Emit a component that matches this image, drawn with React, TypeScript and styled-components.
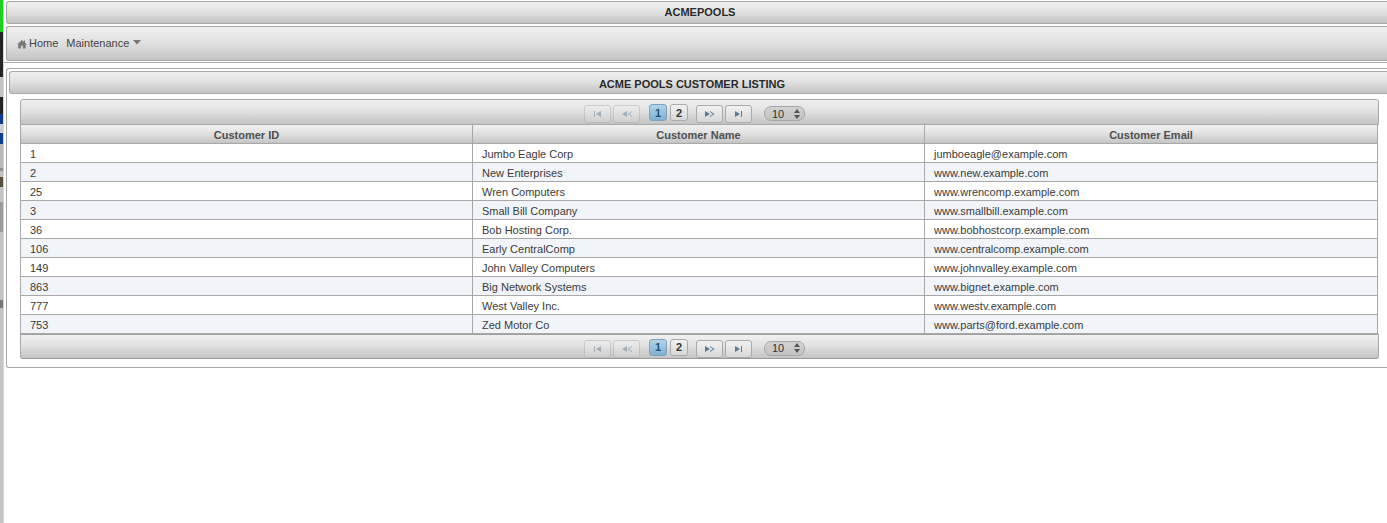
import React from 'react';
import styled, { createGlobalStyle, css } from 'styled-components';

interface Customer {
  id: string;
  name: string;
  email: string;
}

const customers: Customer[] = [
  { id: '1', name: 'Jumbo Eagle Corp', email: 'jumboeagle@example.com' },
  { id: '2', name: 'New Enterprises', email: 'www.new.example.com' },
  { id: '25', name: 'Wren Computers', email: 'www.wrencomp.example.com' },
  { id: '3', name: 'Small Bill Company', email: 'www.smallbill.example.com' },
  { id: '36', name: 'Bob Hosting Corp.', email: 'www.bobhostcorp.example.com' },
  { id: '106', name: 'Early CentralComp', email: 'www.centralcomp.example.com' },
  { id: '149', name: 'John Valley Computers', email: 'www.johnvalley.example.com' },
  { id: '863', name: 'Big Network Systems', email: 'www.bignet.example.com' },
  { id: '777', name: 'West Valley Inc.', email: 'www.westv.example.com' },
  { id: '753', name: 'Zed Motor Co', email: 'www.parts@ford.example.com' },
];

// bits of the window behind the browser, down the left edge
const stripSegments: { color: string; height: number }[] = [
  { color: '#19d419', height: 32 },
  { color: '#242424', height: 45 },
  { color: '#c4c4c4', height: 20 },
  { color: '#222222', height: 17 },
  { color: '#0c3f94', height: 10 },
  { color: '#c9d0d4', height: 9 },
  { color: '#0c3f94', height: 11 },
  { color: '#b9b9b9', height: 24 },
  { color: '#8f8f8f', height: 3 },
  { color: '#c4c4c4', height: 6 },
  { color: '#5a5040', height: 10 },
  { color: '#c4c4c4', height: 15 },
  { color: '#9b9b9b', height: 30 },
  { color: '#c4c4c4', height: 68 },
  { color: '#777777', height: 8 },
  { color: '#c4c4c4', height: 215 },
];

const GlobalStyle = createGlobalStyle`
  html, body {
    margin: 0;
    padding: 0;
    height: 100%;
    overflow: hidden;
    background: #fff;
  }
  body {
    font-family: "Liberation Sans", Arial, sans-serif;
    font-size: 11px;
    color: #333;
  }
`;

const barGradient = css`
  background: linear-gradient(to bottom, #f0f0f0 0%, #e2e2e2 45%, #c4c4c4 100%);
`;

const Page = styled.div`
  display: flex;
  width: 1387px;
  height: 523px;
  overflow: hidden;
`;

const Strip = styled.div`
  display: flex;
  flex-direction: column;
  flex: 0 0 3px;
  border-right: 1px solid #d4d4d4;
`;

const StripPiece = styled.div<{ $color: string; $height: number }>`
  flex: 0 0 ${(p) => p.$height}px;
  background: ${(p) => p.$color};
`;

const Main = styled.div`
  flex: 1;
  min-width: 0;
  padding-top: 1px;
`;

const Bars = styled.div`
  display: flex;
  flex-direction: column;
  gap: 2px;
  padding-left: 2px;
`;

const TitleBar = styled.div`
  ${barGradient}
  height: 21px;
  line-height: 21px;
  border: 1px solid #a8a8a8;
  border-right: 0;
  border-radius: 3px 0 0 3px;
  padding-left: 6px;
  text-align: center;
  font-weight: bold;
  font-size: 11px;
  color: #2a2a2a;
`;

const MenuBar = styled.div`
  ${barGradient}
  display: flex;
  align-items: center;
  height: 31px;
  border: 1px solid #a8a8a8;
  border-right: 0;
  border-radius: 3px 0 0 3px;
  padding: 0 0 2px 10px;
  color: #444;
`;

const MenuItem = styled.span`
  display: inline-flex;
  align-items: center;
  margin-right: 8px;
  font-size: 11px;
`;

const Divider = styled.div`
  height: 1px;
  margin-top: 1px;
  background: #a8a8a8;
`;

const Panel = styled.div`
  margin: 5px 0 0 2px;
  height: 296px;
  border: 1px solid #a8a8a8;
  border-right: 0;
  border-radius: 3px 0 0 3px;
  padding: 2px 0 0 2px;
`;

const PanelTitle = styled(TitleBar)`
  height: 19px;
  padding: 2px 13px 0 0;
`;

const TableWrap = styled.div`
  width: 1359px;
  margin: 5px 0 0 11px;
`;

const Paginator = styled.div<{ $top?: boolean }>`
  ${barGradient}
  box-sizing: border-box;
  display: flex;
  align-items: center;
  justify-content: center;
  height: ${(p) => (p.$top ? 26 : 25)}px;
  border: 1px solid #a8a8a8;
  border-radius: ${(p) => (p.$top ? '3px 3px 0 0' : '0 0 3px 3px')};
  padding: 3px 10px 0 0;
  ${(p) => !p.$top && 'border-top: 1px solid #a0a0a0; border-bottom-color: #999;'}
`;

const PageButton = styled.span<{ $off?: boolean; $on?: boolean; $num?: boolean; $gap?: number }>`
  box-sizing: border-box;
  display: inline-flex;
  align-items: center;
  justify-content: center;
  width: ${(p) => (p.$num ? 18 : 27)}px;
  height: ${(p) => (p.$num ? 17 : 18)}px;
  margin-left: ${(p) => p.$gap ?? 0}px;
  margin-top: ${(p) => (p.$num ? -2 : 1)}px;
  border: 1px solid ${(p) => (p.$on ? '#7ba3bf' : '#aaa')};
  border-radius: 3px;
  background: ${(p) =>
    p.$on
      ? 'linear-gradient(to bottom, #b4d3e6, #7fb1d0)'
      : 'linear-gradient(to bottom, #f1f1f1, #d8d8d8)'};
  opacity: ${(p) => (p.$off ? 0.45 : 1)};
  font-weight: bold;
  font-size: 11px;
  color: ${(p) => (p.$on ? '#1f4f73' : '#333')};
`;

const PageSelect = styled.span`
  box-sizing: border-box;
  display: inline-flex;
  align-items: center;
  justify-content: space-between;
  width: 41px;
  height: 15px;
  margin-left: 12px;
  padding: 0 4px 0 7px;
  border: 1px solid #a6a6a6;
  border-radius: 7px;
  background: linear-gradient(to bottom, #d2d2d2, #c2c2c2);
  font-size: 11px;
  color: #333;
`;

const Table = styled.table`
  box-sizing: border-box;
  width: 1358px;
  table-layout: fixed;
  border-collapse: collapse;
  border-left: 1px solid #a8a8a8;
  border-right: 1px solid #a8a8a8;
`;

const HeadCell = styled.th<{ $width?: number }>`
  ${barGradient}
  ${(p) => p.$width && `width: ${p.$width}px;`}
  height: 16px;
  padding: 2px 0 0;
  border-right: 1px solid #a8a8a8;
  border-bottom: 1px solid #a8a8a8;
  text-align: center;
  font-size: 11px;
  font-weight: bold;
  color: #4f4f4f;
  &:last-child {
    border-right: 0;
  }
`;

const Row = styled.tr<{ $alt: boolean }>`
  background: ${(p) => (p.$alt ? '#f1f5fa' : '#fff')};
`;

const Cell = styled.td`
  height: 16px;
  padding: 2px 0 0 9px;
  border-right: 1px solid #a8a8a8;
  border-bottom: 1px solid #a8a8a8;
  font-size: 11px;
  color: #3a3a3a;
  &:last-child {
    border-right: 0;
  }
`;

const HomeIcon = () => (
  <svg width="10" height="10" viewBox="0 0 10 10" style={{ margin: '3px 2px 0 0' }}>
    <path
      d="M5 1 L7 2.8 V1.5 H8 V3.7 L10 5.5 H8.8 V9.5 H5.9 V6.8 H4.1 V9.5 H1.2 V5.5 H0 Z"
      fill="#7a7a7a"
    />
  </svg>
);

const MenuCaret = () => (
  <svg width="8" height="5" viewBox="0 0 8 5" style={{ marginLeft: 4 }}>
    <path d="M0 0 H8 L4 4.5 Z" fill="#777" />
  </svg>
);

const pagerColor = '#5c7b92';

const FirstIcon = () => (
  <svg width="9" height="6" viewBox="0 0 9 6">
    <path d="M1 0 H2 V6 H1 Z M8 0 V6 L3 3 Z" fill={pagerColor} />
  </svg>
);

const PrevIcon = () => (
  <svg width="10" height="6" viewBox="0 0 10 6">
    <path d="M5 0 V6 L0 3 Z M10 0 V1 L7 3 L10 5 V6 L5.5 3 Z" fill={pagerColor} />
  </svg>
);

const NextIcon = () => (
  <svg width="10" height="6" viewBox="0 0 10 6">
    <path d="M0 0 V6 L5 3 Z M5 0 V1 L8 3 L5 5 V6 L9.5 3 Z" fill={pagerColor} />
  </svg>
);

const LastIcon = () => (
  <svg width="9" height="6" viewBox="0 0 9 6">
    <path d="M1 0 V6 L6 3 Z M7 0 H8 V6 H7 Z" fill={pagerColor} />
  </svg>
);

const SelectArrows = () => (
  <svg width="6" height="10" viewBox="0 0 6 10">
    <path d="M3 0 L6 4 H0 Z M3 10 L0 6 H6 Z" fill="#555" />
  </svg>
);

const Pager: React.FC<{ top?: boolean }> = ({ top }) => (
  <Paginator $top={top}>
    <PageButton $off>
      <FirstIcon />
    </PageButton>
    <PageButton $off $gap={2}>
      <PrevIcon />
    </PageButton>
    <PageButton $num $on $gap={9}>
      1
    </PageButton>
    <PageButton $num $gap={3}>
      2
    </PageButton>
    <PageButton $gap={8}>
      <NextIcon />
    </PageButton>
    <PageButton $gap={2}>
      <LastIcon />
    </PageButton>
    <PageSelect>
      10
      <SelectArrows />
    </PageSelect>
  </Paginator>
);

const App: React.FC = () => {
  return (
    <Page>
      <GlobalStyle />
      <Strip>
        {stripSegments.map((s, index) => (
          <StripPiece key={index} $color={s.color} $height={s.height} />
        ))}
      </Strip>
      <Main>
        <Bars>
          <TitleBar>ACMEPOOLS</TitleBar>
          <MenuBar>
            <MenuItem>
              <HomeIcon />
              Home
            </MenuItem>
            <MenuItem>
              Maintenance
              <MenuCaret />
            </MenuItem>
          </MenuBar>
        </Bars>
        <Divider />
        <Panel>
          <PanelTitle>ACME POOLS CUSTOMER LISTING</PanelTitle>
          <TableWrap>
            <Pager top />
            <Table>
              <thead>
                <tr>
                  <HeadCell $width={451}>Customer ID</HeadCell>
                  <HeadCell $width={451}>Customer Name</HeadCell>
                  <HeadCell>Customer Email</HeadCell>
                </tr>
              </thead>
              <tbody>
                {customers.map((c, index) => (
                  <Row key={c.id} $alt={index % 2 === 1}>
                    <Cell>{c.id}</Cell>
                    <Cell>{c.name}</Cell>
                    <Cell>{c.email}</Cell>
                  </Row>
                ))}
              </tbody>
            </Table>
            <Pager />
          </TableWrap>
        </Panel>
      </Main>
    </Page>
  );
};

export default App;
